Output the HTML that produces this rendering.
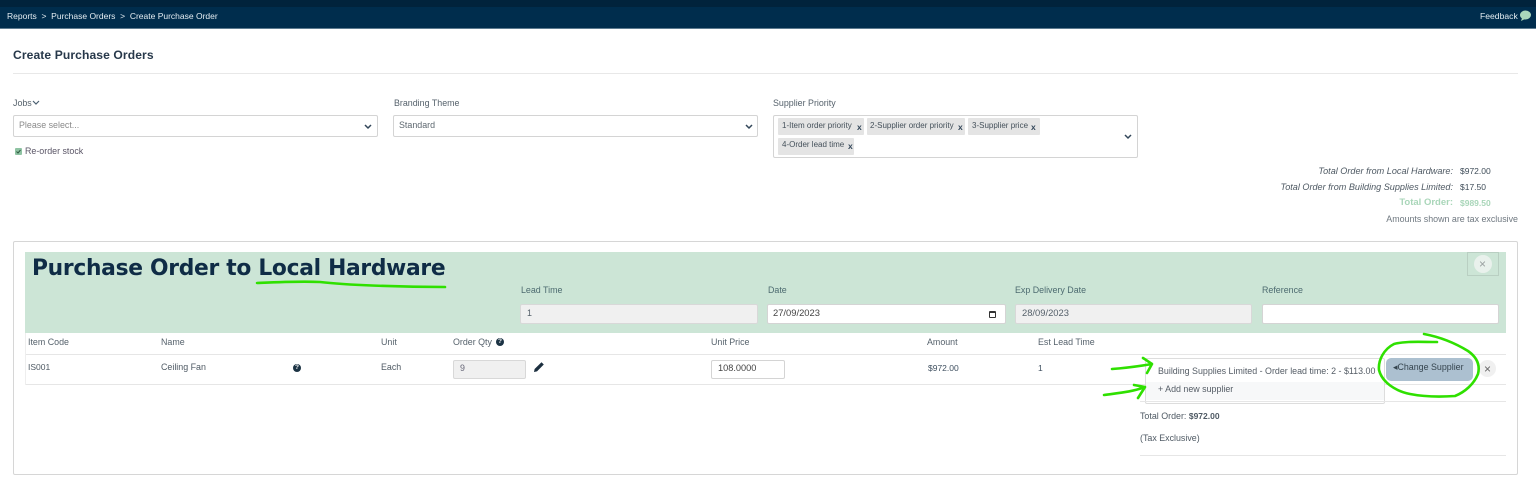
<!DOCTYPE html>
<html><head><meta charset="utf-8"><style>
html,body{margin:0;padding:0;background:#fff}
body{width:1536px;height:479px;position:relative;overflow:hidden;font-family:"Liberation Sans",sans-serif;font-size:8.9px;color:#4a5560}
.a{position:absolute;white-space:nowrap;line-height:14px}
.b{position:absolute;box-sizing:border-box;border-radius:2px}
.i{border:1px solid #d4d4d4;background:#fff}
.g{border:1px solid #d8d8d8;background:#f0f0f0}
.c{position:absolute;background:#e4e4e4;border-radius:1px}
.lb{color:#56626c}
.q{position:absolute;box-sizing:border-box;width:8px;height:8px;background:#1c3344;border-radius:50%;color:#fff;font:bold 6.5px/8px "Liberation Sans",sans-serif;text-align:center}
</style></head><body>
<div class="b" style="left:0;top:0;width:1536px;height:29px;background:#002d4d;border-radius:0;border-bottom:1px solid #5d7b90"></div>
<div class="b" style="left:0;top:0;width:1536px;height:7px;background:#01233c;border-radius:0"></div>
<div class="a" style="left:7px;top:9px;color:#e4edf2;font-size:8.5px">Reports &nbsp;&gt;&nbsp; Purchase Orders &nbsp;&gt;&nbsp; Create Purchase Order</div>
<div class="a" style="left:1480px;top:9px;color:#e4edf2;font-size:8.6px">Feedback</div>
<svg style="position:absolute;left:1519px;top:10px" width="13" height="12"><ellipse cx="6.5" cy="5" rx="5.5" ry="4.5" fill="#aad8bb"/><path d="M3 8L2 11 6 9z" fill="#aad8bb"/></svg>

<div class="a" style="left:13px;top:48px;font:bold 12.1px/15px 'Liberation Sans',sans-serif;color:#27384a;letter-spacing:.1px">Create Purchase Orders</div>
<div class="b" style="left:13px;top:73px;width:1505px;height:1px;background:#e8e8e8;border-radius:0"></div>

<div class="a lb" style="left:13px;top:96px">Jobs</div>
<svg style="position:absolute;left:32px;top:100px" width="8" height="6"><path d="M1 1L4 4 7 1" fill="none" stroke="#4a5f70" stroke-width="1.2"/></svg>
<div class="b i" style="left:13px;top:115px;width:365px;height:22px"></div>
<div class="a" style="left:19px;top:118px;color:#8a8a8a">Please select...</div>
<svg style="position:absolute;left:364px;top:124px" width="8" height="6"><path d="M1 1L4 4 7 1" fill="none" stroke="#33475a" stroke-width="1.5"/></svg>
<svg style="position:absolute;left:15px;top:148px" width="7" height="7"><rect width="7" height="7" rx="1" fill="#8fc3a3"/><path d="M1.5 3.5L3 5 5.5 2" fill="none" stroke="#2f5a40" stroke-width="1"/></svg>
<div class="a" style="left:25px;top:144px;color:#5a5566">Re-order stock</div>

<div class="a lb" style="left:394px;top:96px">Branding Theme</div>
<div class="b i" style="left:393px;top:115px;width:365px;height:22px"></div>
<div class="a" style="left:399px;top:118px;color:#5e6870">Standard</div>
<svg style="position:absolute;left:745px;top:124px" width="8" height="6"><path d="M1 1L4 4 7 1" fill="none" stroke="#33475a" stroke-width="1.5"/></svg>

<div class="a lb" style="left:773px;top:96px">Supplier Priority</div>
<div class="b i" style="left:773px;top:115px;width:365px;height:43px"></div>
<div class="c" style="left:778px;top:118px;width:86px;height:17px"></div>
<div class="c" style="left:867px;top:118px;width:98px;height:17px"></div>
<div class="c" style="left:968px;top:118px;width:72px;height:17px"></div>
<div class="c" style="left:778px;top:138px;width:76px;height:17px"></div>
<div class="a" style="left:782px;top:119px;font-size:8px;color:#44505a">1-Item order priority</div>
<div class="a" style="left:857px;top:120px;font-size:8.5px;font-weight:bold;color:#33475a">x</div>
<div class="a" style="left:870px;top:119px;font-size:8px;color:#44505a">2-Supplier order priority</div>
<div class="a" style="left:958px;top:120px;font-size:8.5px;font-weight:bold;color:#33475a">x</div>
<div class="a" style="left:972px;top:119px;font-size:8px;color:#44505a">3-Supplier price</div>
<div class="a" style="left:1031px;top:120px;font-size:8.5px;font-weight:bold;color:#33475a">x</div>
<div class="a" style="left:782px;top:138px;font-size:8px;color:#44505a">4-Order lead time</div>
<div class="a" style="left:848px;top:139px;font-size:8.5px;font-weight:bold;color:#33475a">x</div>
<svg style="position:absolute;left:1124px;top:134px" width="8" height="6"><path d="M1 1L4 4 7 1" fill="none" stroke="#33475a" stroke-width="1.5"/></svg>

<div class="a" style="right:83px;top:164px;font-style:italic;color:#4f5a64;font-size:9.1px">Total Order from Local Hardware:</div>
<div class="a" style="left:1460px;top:164px;font-size:8.5px;color:#3f4d59">$972.00</div>
<div class="a" style="right:83px;top:180px;font-style:italic;color:#4f5a64;font-size:9.1px">Total Order from Building Supplies Limited:</div>
<div class="a" style="left:1460px;top:180px;font-size:8.5px;color:#3f4d59">$17.50</div>
<div class="a" style="right:83px;top:196px;color:#a9d6b9;font-weight:bold;font-size:9.5px">Total Order:</div>
<div class="a" style="left:1460px;top:196px;font-size:8.5px;font-weight:bold;color:#a9d6b9">$989.50</div>
<div class="a" style="right:18px;top:212px;color:#6f7880">Amounts shown are tax exclusive</div>

<div class="b" style="left:13px;top:241px;width:1505px;height:234px;border:1px solid #d6d6d6"></div>
<div class="b" style="left:25px;top:252px;width:1481px;height:81px;background:#cce5d6;border-radius:0"></div>
<div class="a" style="left:32px;top:255px;font:bold 21.8px/27px 'DejaVu Sans',sans-serif;color:#0f2c46;letter-spacing:-.3px">Purchase Order to Local Hardware</div>

<div class="a" style="left:521px;top:283px;color:#4d6b70">Lead Time</div>
<div class="b g" style="left:520px;top:304px;width:238px;height:20px"></div>
<div class="a" style="left:527px;top:306px;color:#55606a">1</div>
<div class="a" style="left:768px;top:283px;color:#4d6b70">Date</div>
<div class="b i" style="left:767px;top:304px;width:239px;height:20px"></div>
<div class="a" style="left:773px;top:306px;color:#444;font-size:9.4px">27/09/2023</div>
<div class="b" style="left:989px;top:311px;width:7px;height:7px;border:1px solid #333;border-top-width:2px;border-radius:1px"></div>
<div class="a" style="left:1015px;top:283px;color:#4d6b70">Exp Delivery Date</div>
<div class="b g" style="left:1015px;top:304px;width:237px;height:20px"></div>
<div class="a" style="left:1022px;top:306px;color:#55606a;font-size:9.4px">28/09/2023</div>
<div class="a" style="left:1262px;top:283px;color:#4d6b70">Reference</div>
<div class="b i" style="left:1262px;top:304px;width:237px;height:20px"></div>

<div class="b" style="left:1467px;top:252px;width:32px;height:24px;border:1px solid #b9cfc2;border-radius:0"></div>
<div class="b" style="left:1474px;top:255px;width:18px;height:18px;background:#e9f1ec;border-radius:50%"></div>
<div class="a" style="left:1479px;top:257px;font-size:12px;color:#9aa0a0">×</div>

<div class="a lb" style="left:28px;top:335px">Item Code</div>
<div class="a lb" style="left:161px;top:335px">Name</div>
<div class="a lb" style="left:381px;top:335px">Unit</div>
<div class="a lb" style="left:453px;top:335px">Order Qty</div>
<div class="q" style="left:496px;top:338px">?</div>
<div class="a lb" style="left:711px;top:335px">Unit Price</div>
<div class="a lb" style="left:927px;top:335px">Amount</div>
<div class="a lb" style="left:1038px;top:335px">Est Lead Time</div>
<div class="b" style="left:25px;top:354px;width:1481px;height:1px;background:#e6e6e6;border-radius:0"></div>
<div class="b" style="left:25px;top:384px;width:1481px;height:1px;background:#e6e6e6;border-radius:0"></div>
<div class="b" style="left:25px;top:333px;width:1px;height:52px;background:#eee;border-radius:0"></div>

<div class="a" style="left:28px;top:360px;font-size:8.5px;color:#4f5a64">IS001</div>
<div class="a" style="left:161px;top:360px;color:#4f5a64">Ceiling Fan</div>
<div class="q" style="left:293px;top:364px">?</div>
<div class="a" style="left:381px;top:360px;color:#4f5a64">Each</div>
<div class="b g" style="left:453px;top:360px;width:73px;height:19px"></div>
<div class="a" style="left:460px;top:361px;color:#667">9</div>
<svg style="position:absolute;left:533px;top:361px" width="12" height="12"><path d="M1 11L1.6 8 8.5 1.2 10.8 3.5 4 10.4z" fill="#1c2f3f"/></svg>
<div class="b i" style="left:711px;top:360px;width:74px;height:19px"></div>
<div class="a" style="left:718px;top:361px;color:#444;font-size:9.2px">108.0000</div>
<div class="a" style="left:928px;top:361px;font-size:8.5px;color:#3f5060">$972.00</div>
<div class="a" style="left:1038px;top:361px;font-size:8.5px;color:#3f5060">1</div>

<div class="b" style="left:1145px;top:358px;width:240px;height:46px;background:#fff;border:1px solid #ddd"></div>
<div class="b" style="left:1146px;top:382px;width:238px;height:18px;background:#f7f8f9;border-radius:0"></div>
<div class="a" style="left:1158px;top:364px;color:#555d66">Building Supplies Limited - Order lead time: 2 - $113.00</div>
<div class="a" style="left:1158px;top:382px;color:#555d66">+ Add new supplier</div>
<div class="b" style="left:1386px;top:358px;width:87px;height:23px;background:#acc0d0;border-radius:5px"></div>
<div class="a" style="left:1393px;top:360px;color:#36454f;font-size:8.9px">◂Change Supplier</div>
<div class="b" style="left:1479px;top:360px;width:17px;height:17px;background:#f0f0f0;border-radius:50%"></div>
<div class="a" style="left:1484px;top:362px;font-size:12px;color:#666">×</div>

<div class="b" style="left:1140px;top:401px;width:366px;height:1px;background:#e6e6e6;border-radius:0"></div>
<div class="a" style="left:1140px;top:409px;color:#4f5a64">Total Order: <span style="font-size:8.5px;font-weight:bold">$972.00</span></div>
<div class="a" style="left:1140px;top:431px;color:#4f5a64">(Tax Exclusive)</div>
<div class="b" style="left:1140px;top:455px;width:366px;height:1px;background:#e6e6e6;border-radius:0"></div>

<svg style="position:absolute;left:0;top:0" width="1536" height="479" fill="none" stroke="#2fe000" stroke-width="2.6" stroke-linecap="round" stroke-linejoin="round">
<path d="M257 283C280 282 300 281 320 282C345 285 400 287 445 287"/>
<path d="M1424 334C1440 337 1455 343 1468 351C1478 358 1480 366 1478 374C1474 384 1465 392 1455 396C1440 397 1425 397 1410 394C1395 391 1382 382 1379 370C1378 360 1384 349 1394 344C1405 341 1420 342 1437 342"/>
<path d="M1112 369C1125 368 1140 366 1152 364M1143 358L1152 364 1147 373"/>
<path d="M1104 395C1118 393 1132 392 1145 387M1134 385L1145 387 1138 398"/>
</svg>
</body></html>
